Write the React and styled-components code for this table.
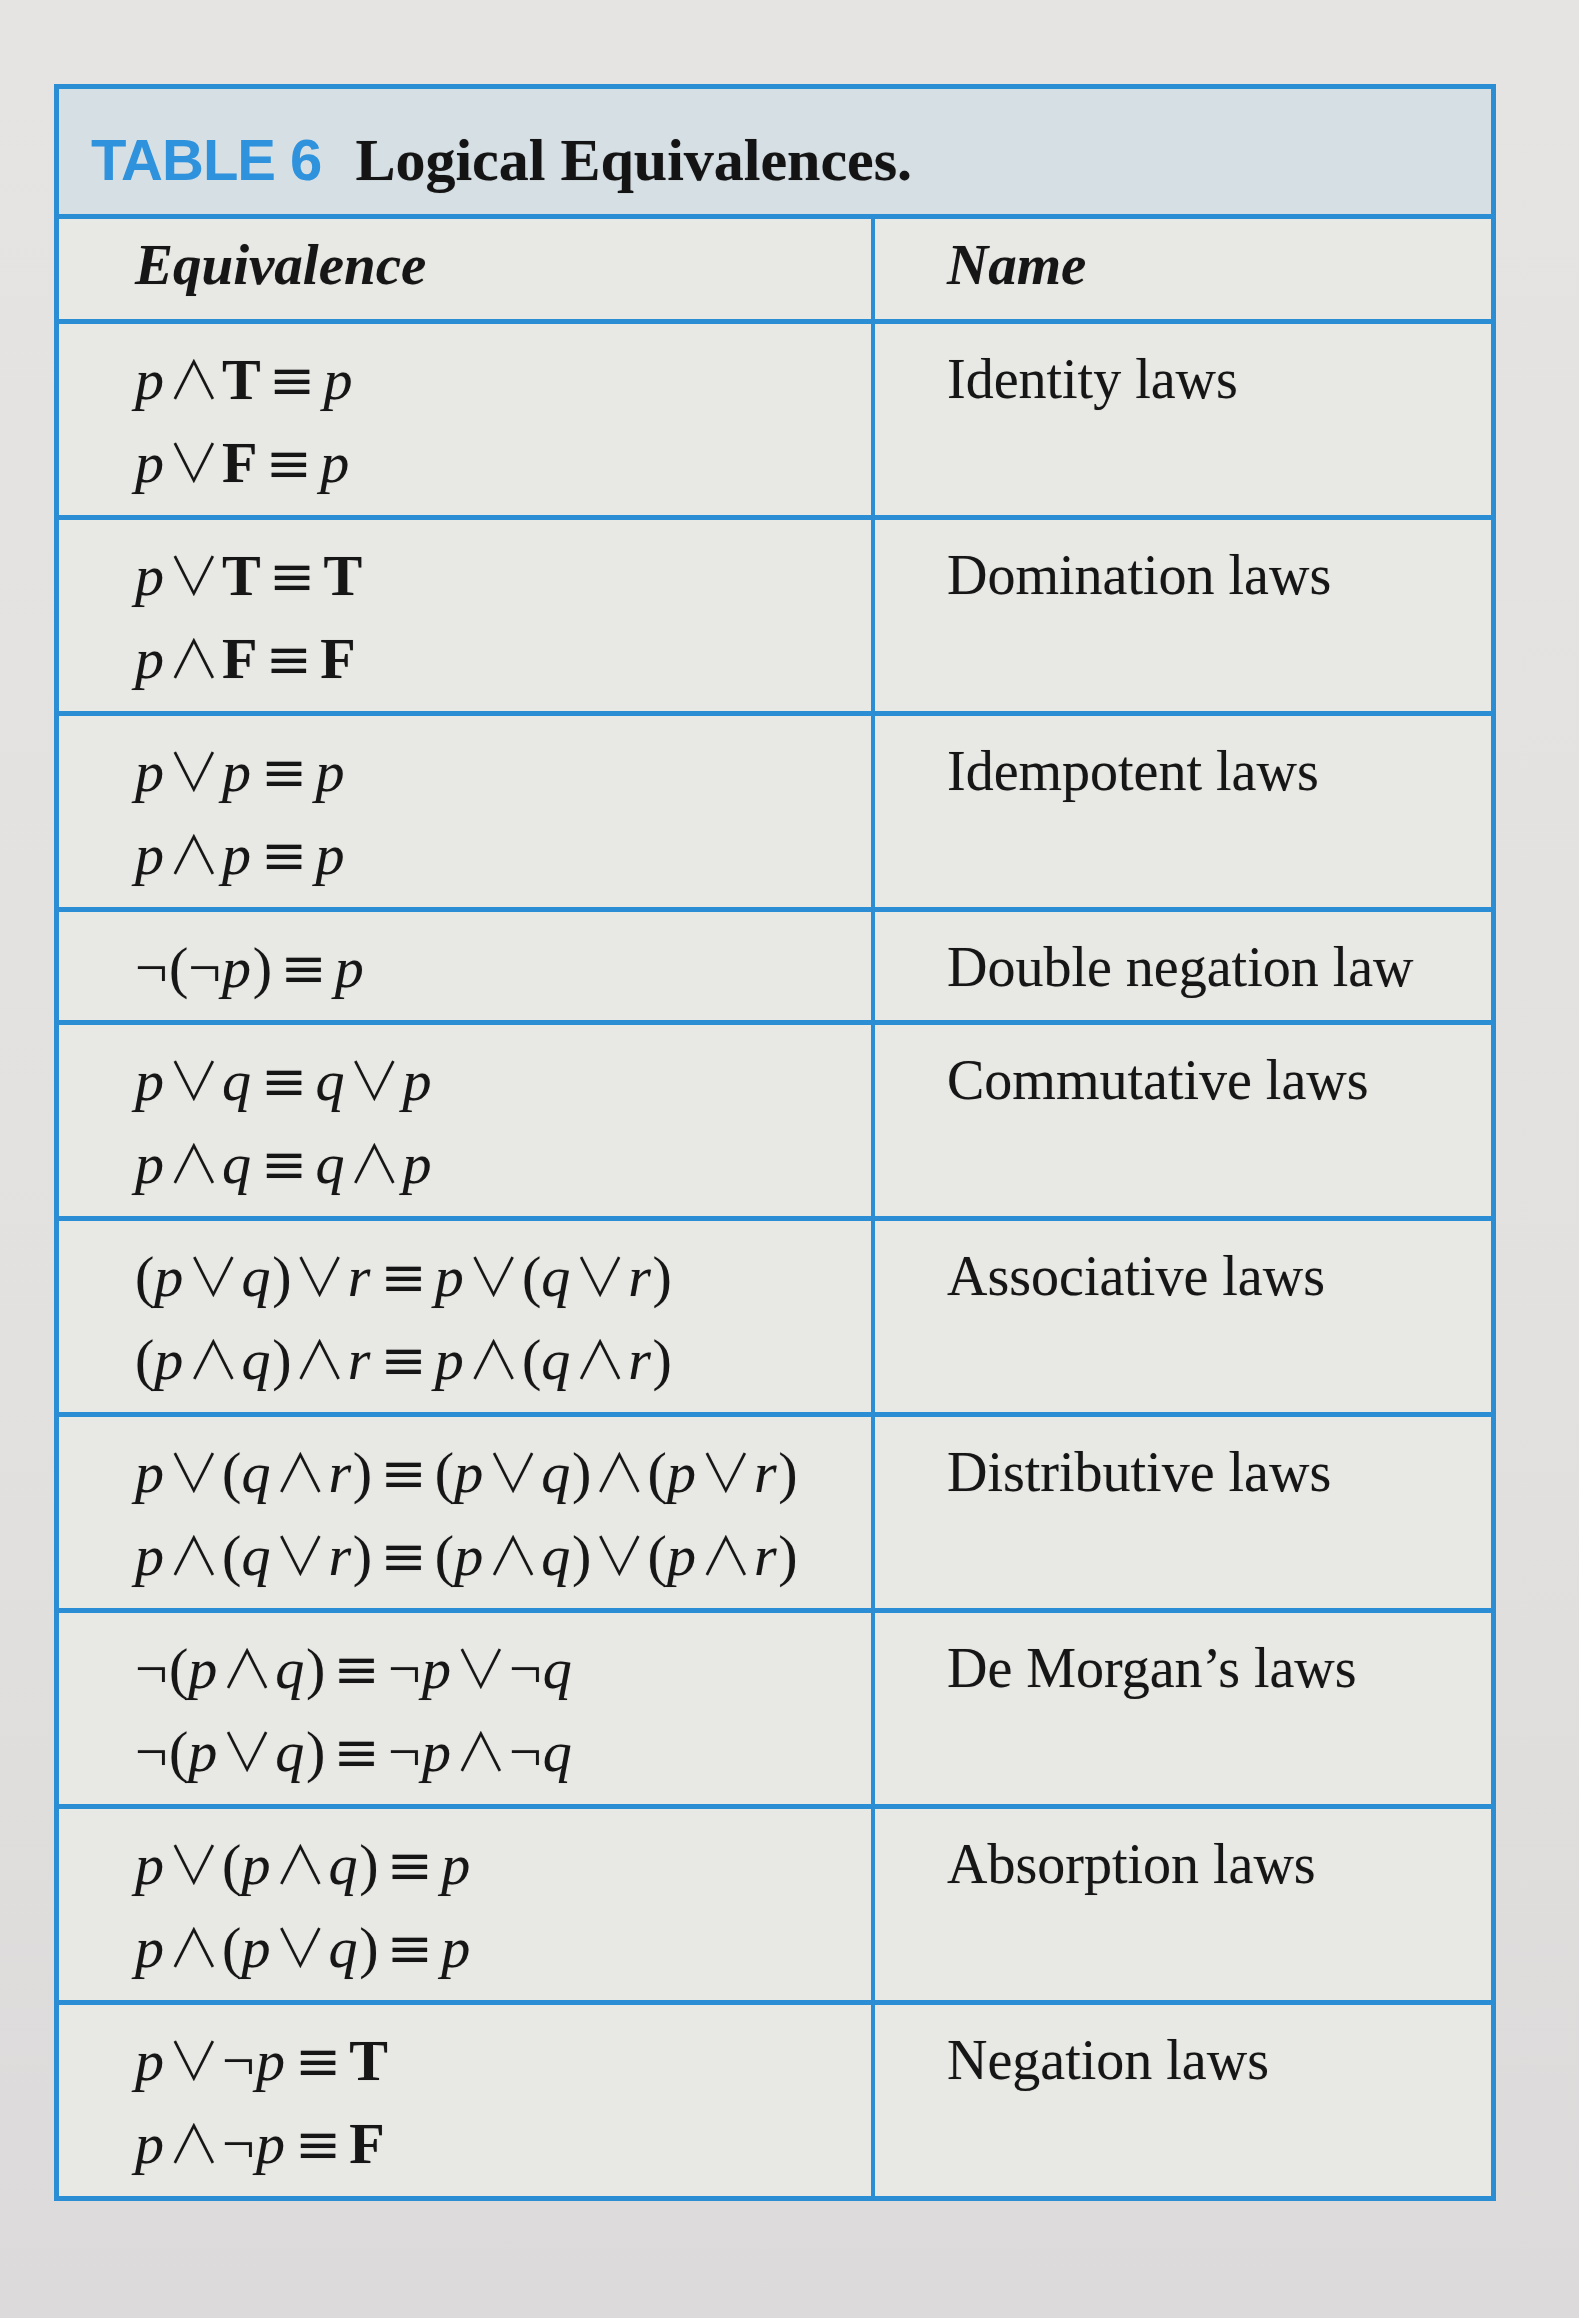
import React from "react";
import styled, { createGlobalStyle } from "styled-components";

const Global = createGlobalStyle`
  html, body { margin: 0; padding: 0; }
  body {
    background: #e3e1df;
    font-family: "Liberation Serif", "DejaVu Serif", serif;
    color: #161616;
  }
`;

const BLUE = "#2b8dd4";

const Page = styled.div`
  min-height: 2318px;
  box-sizing: border-box;
  padding: 84px 0 0 54px;
  background: linear-gradient(180deg, #e6e4e2 0%, #e2e1df 60%, #dcdada 100%);
`;

const Table = styled.div`
  width: 1442px;
  box-sizing: border-box;
  border: 5px solid ${BLUE};
  background: #e8e8e5;
`;

const TitleBar = styled.div`
  display: flex;
  align-items: baseline;
  gap: 34px;
  padding: 31px 0 14px 32px;
  height: 80px;
  line-height: 80px;
  background: #d5dfe4;
  border-bottom: 5px solid ${BLUE};
`;

const TableNum = styled.span`
  font-family: "Liberation Sans", Arial, sans-serif;
  font-weight: 700;
  font-size: 58px;
  letter-spacing: -1px;
  color: #2f92dc;
`;

const TableTitle = styled.span`
  font-family: "Liberation Serif", serif;
  font-weight: 700;
  font-size: 60px;
  color: #141414;
  text-shadow: 0 0 1px rgba(0, 0, 0, 0.35);
`;

const Row = styled.div`
  display: grid;
  grid-template-columns: 816px 1fr;
  border-top: ${(p) => (p.$first ? "none" : `5px solid ${BLUE}`)};
`;

const Cell = styled.div`
  box-sizing: border-box;
  padding: ${(p) => (p.$header ? "4px 0 13px" : "14px 0 11px")} ${(p) => (p.$left ? "76px" : "72px")};
  border-right: ${(p) => (p.$left ? `4px solid ${BLUE}` : "none")};
  font-size: 58px;
  line-height: 83px;
  text-shadow: 0 0 1px rgba(0, 0, 0, 0.3);
`;

const HeadText = styled.div`
  height: 83px;
  font-family: "Liberation Serif", serif;
  font-weight: 700;
  font-style: italic;
  font-size: 57px;
`;

const NameText = styled.div`
  height: 83px;
  font-family: "Liberation Serif", serif;
  font-size: 56px;
`;

const Line = styled.div`
  height: 83px;
  font-size: 58px;
  white-space: nowrap;
`;

const Var = styled.i`
  font-family: "Liberation Serif", serif;
  font-style: italic;
  margin-right: 0.03em;
`;

const Const = styled.b`
  font-family: "Liberation Serif", serif;
  font-weight: 700;
`;

const Op = styled.span`
  font-family: "Noto Sans CJK JP", "DejaVu Sans", sans-serif;
  font-weight: 300;
  font-size: 0.9em;
  line-height: 0;
  margin: 0 0.04em;
`;

const Equiv = styled.span`
  font-family: "DejaVu Serif", "Liberation Serif", serif;
  font-size: 0.95em;
  line-height: 0;
  margin: 0 0.15em;
`;

const Neg = styled.span`
  font-family: "Liberation Serif", serif;
  margin-right: 0.02em;
`;

const Paren = styled.span`
  font-family: "Liberation Serif", serif;
`;

function Formula({ text }) {
  return (
    <Line>
      {Array.from(text).map((ch, i) => {
        if ("pqr".includes(ch)) return <Var key={i}>{ch}</Var>;
        if ("TF".includes(ch)) return <Const key={i}>{ch}</Const>;
        if (ch === "≡") return <Equiv key={i}>{ch}</Equiv>;
        if ("∧∨".includes(ch)) return <Op key={i}>{ch}</Op>;
        if (ch === "¬") return <Neg key={i}>{ch}</Neg>;
        return <Paren key={i}>{ch}</Paren>;
      })}
    </Line>
  );
}

const rows = [
  { eq: ["p∧T≡p", "p∨F≡p"], name: "Identity laws" },
  { eq: ["p∨T≡T", "p∧F≡F"], name: "Domination laws" },
  { eq: ["p∨p≡p", "p∧p≡p"], name: "Idempotent laws" },
  { eq: ["¬(¬p)≡p"], name: "Double negation law" },
  { eq: ["p∨q≡q∨p", "p∧q≡q∧p"], name: "Commutative laws" },
  { eq: ["(p∨q)∨r≡p∨(q∨r)", "(p∧q)∧r≡p∧(q∧r)"], name: "Associative laws" },
  { eq: ["p∨(q∧r)≡(p∨q)∧(p∨r)", "p∧(q∨r)≡(p∧q)∨(p∧r)"], name: "Distributive laws" },
  { eq: ["¬(p∧q)≡¬p∨¬q", "¬(p∨q)≡¬p∧¬q"], name: "De Morgan’s laws" },
  { eq: ["p∨(p∧q)≡p", "p∧(p∨q)≡p"], name: "Absorption laws" },
  { eq: ["p∨¬p≡T", "p∧¬p≡F"], name: "Negation laws" },
];

export default function App() {
  return (
    <>
      <Global />
      <Page>
        <Table>
          <TitleBar>
            <TableNum>TABLE 6</TableNum>
            <TableTitle>Logical Equivalences.</TableTitle>
          </TitleBar>
          <Row $first>
            <Cell $left $header>
              <HeadText>Equivalence</HeadText>
            </Cell>
            <Cell $header>
              <HeadText>Name</HeadText>
            </Cell>
          </Row>
          {rows.map((r) => (
            <Row key={r.name}>
              <Cell $left>
                {r.eq.map((e) => (
                  <Formula key={e} text={e} />
                ))}
              </Cell>
              <Cell>
                <NameText>{r.name}</NameText>
              </Cell>
            </Row>
          ))}
        </Table>
      </Page>
    </>
  );
}
